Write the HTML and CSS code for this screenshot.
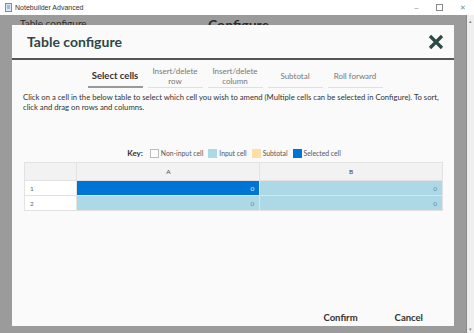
FILE: index.html
```html
<!DOCTYPE html>
<html lang="en">
<head>
<meta charset="UTF-8" />
<title>Notebuilder Advanced</title>
<link rel="stylesheet" href="styles.css">
</head>
<body>

  <div class="titlebar">
    <svg class="app-icon" width="7" height="9" viewBox="0 0 7 9">
      <rect x="0.5" y="0.5" width="6" height="8" fill="#dbe7f5" stroke="#6a8fc0" />
      <line x1="2" y1="3" x2="5" y2="3" stroke="#6a8fc0" />
      <line x1="2" y1="5" x2="5" y2="5" stroke="#6a8fc0" />
    </svg>
    <span class="app-name">Notebuilder Advanced</span>
    <div class="win-controls">
      <span class="win-btn">&#8211;</span>
      <span class="win-btn"><span class="max-box"></span></span>
      <span class="win-btn">&#10005;</span>
    </div>
  </div>

  <div class="app">
    <div class="backdrop">
      <div class="page-head">
        <span class="page-title">Table configure</span>
        <span class="page-heading">Configure</span>
      </div>

      <div class="modal">
        <div class="modal-header">
          <h2>Table configure</h2>
          <svg class="close" width="16" height="16" viewBox="0 0 16 16">
            <path d="M2 2 L14 14 M14 2 L2 14" stroke="#2e4a46" stroke-width="3.2" />
          </svg>
        </div>

        <div class="tabs">
          <div class="tab active">Select cells</div>
          <div class="tab">Insert/delete<br>row</div>
          <div class="tab">Insert/delete<br>column</div>
          <div class="tab">Subtotal</div>
          <div class="tab">Roll forward</div>
        </div>

        <p class="intro">Click on a cell in the below table to select which cell you wish to amend (Multiple cells can be selected in Configure). To sort, click and drag on rows and columns.</p>

        <div class="key">
          <b>Key:</b>
          <span class="swatch plain"></span> Non-input cell
          <span class="swatch input"></span> Input cell
          <span class="swatch subtotal"></span> Subtotal
          <span class="swatch selected"></span> Selected cell
        </div>

        <table class="grid">
          <tr>
            <th class="corner"></th>
            <th>A</th>
            <th>B</th>
          </tr>
          <tr>
            <td class="rowhead">1</td>
            <td class="cell selected">0</td>
            <td class="cell input">0</td>
          </tr>
          <tr>
            <td class="rowhead">2</td>
            <td class="cell input">0</td>
            <td class="cell input">0</td>
          </tr>
        </table>

        <div class="modal-footer">
          <button>Confirm</button>
          <button>Cancel</button>
        </div>
      </div>
    </div>
    <div class="scrollbar">
      <span class="arrow">&#9652;</span>
      <span class="arrow">&#9662;</span>
    </div>
  </div>

</body>
</html>
```

FILE: styles.css
```css
html, body {
  margin: 0;
  height: 100%;
  overflow: hidden;
}
body {
  font-family: Lato, "Liberation Sans", sans-serif;
  background: #9b9b9b;
  display: flex;
  flex-direction: column;
}
.titlebar {
  height: 15px;
  background: white;
  display: flex;
  align-items: center;
  padding-left: 5px;
  font-family: "Liberation Sans", sans-serif;
  font-size: 7px;
  color: #333;
}
.app-icon {
  margin-right: 3px;
}
.win-controls {
  margin-left: auto;
  display: flex;
}
.win-btn {
  width: 23px;
  text-align: center;
  color: #888;
  font-size: 7px;
}
.max-box {
  display: inline-block;
  width: 5px;
  height: 5px;
  border: 1px solid #888;
}
.app {
  flex: 1;
  display: flex;
}
.backdrop {
  flex: 1;
  position: relative;
  background: #9b9b9b;
  border-right: 1px solid #8a8a8a;
}
.page-head {
  display: flex;
  align-items: flex-start;
  padding: 2px 0 0 20px;
  color: #2b2b2b;
}
.page-title {
  font-size: 10px;
  width: 188px;
}
.page-heading {
  font-size: 14px;
  font-weight: bold;
  margin-top: -1px;
}
.scrollbar {
  width: 7px;
  background: #efefef;
  display: flex;
  flex-direction: column;
  justify-content: space-between;
  align-items: center;
  font-size: 5px;
  color: #888;
  padding: 3px 0 1px;
}
.modal {
  position: absolute;
  left: 12px;
  top: 10px;
  width: 442px;
  height: 301px;
  background: #fafafa;
  display: flex;
  flex-direction: column;
}
.modal-header {
  height: 33px;
  border-bottom: 2px solid #555;
  display: flex;
  align-items: center;
  padding: 0 10px 0 15px;
}
.modal-header h2 {
  margin: 0;
  font-size: 14px;
  font-weight: bold;
  color: #2e4646;
}
.close {
  margin-left: auto;
}
.tabs {
  display: flex;
  justify-content: center;
  gap: 5px;
  margin-top: 5px;
  padding-left: 4px;
}
.tab {
  width: 55px;
  height: 22px;
  border-bottom: 1px solid #e0e0e0;
  font-size: 8px;
  line-height: 10px;
  color: #777;
  text-align: center;
  display: flex;
  align-items: center;
  justify-content: center;
}
.tab.active {
  font-size: 9.5px;
  font-weight: bold;
  color: #333;
  border-bottom: 2px solid #999;
  height: 21px;
}
.intro {
  margin: 4px 4px 0 11px;
  font-size: 7.7px;
  line-height: 10px;
  color: #333;
}
.key {
  margin-top: 36px;
  display: flex;
  align-items: center;
  justify-content: center;
  font-size: 6.8px;
  color: #555;
  gap: 2px;
  padding-left: 2px;
}
.key b {
  font-size: 8px;
  color: #333;
  margin-right: 2px;
}
.swatch {
  width: 9px;
  height: 9px;
  margin-left: 3px;
  box-sizing: border-box;
}
.swatch.plain {
  border: 1px solid #bbb;
  background: white;
}
.swatch.input {
  background: #add8e6;
}
.swatch.subtotal {
  background: #fbdfa5;
}
.swatch.selected {
  background: #0074d4;
}
.grid {
  margin: 4px 11px 0 12px;
  border-collapse: collapse;
  font-size: 6.5px;
  color: #666;
}
.grid th {
  height: 15px;
  background: #f2f2f2;
  border: 1px solid #e2e2e2;
  font-weight: normal;
  color: #444;
}
.grid th.corner {
  width: 50px;
}
.grid td {
  height: 14px;
  border: 1px solid #e2e2e2;
  padding: 0 5px;
}
.rowhead {
  background: white;
}
.cell {
  width: 174px;
  text-align: right;
}
.cell.input {
  background: #add8e6;
  color: #6b8a96;
}
.cell.selected {
  background: #0074d4;
  color: #e8f2ff;
}
.modal-footer {
  margin-top: auto;
  display: flex;
  justify-content: flex-end;
  gap: 37px;
  padding: 0 31px 3px 0;
}
.modal-footer button {
  background: none;
  border: none;
  padding: 0;
  font-family: Lato, "Liberation Sans", sans-serif;
  font-size: 9.5px;
  font-weight: bold;
  color: #333;
  cursor: pointer;
}
```
